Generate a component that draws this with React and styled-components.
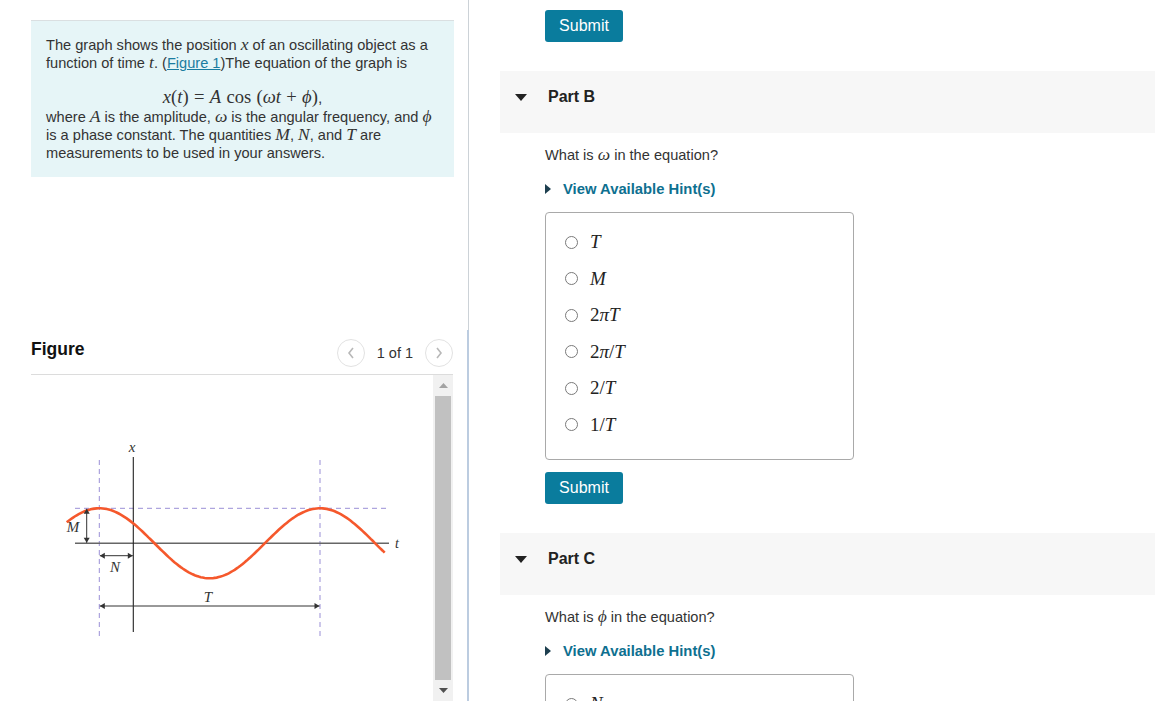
import React from "react";
import styled, { createGlobalStyle } from "styled-components";

const GlobalStyle = createGlobalStyle`
  html, body { margin: 0; padding: 0; height: 100%; overflow: hidden; background: #fff; }
  body { font-family: "Liberation Sans", Arial, sans-serif; color: #333; }
  * { box-sizing: border-box; }
`;

const Page = styled.div`
  display: flex;
  width: 1155px;
  height: 701px;
  overflow: hidden;
`;

const LeftPane = styled.div`
  width: 469px;
  flex: none;
  display: flex;
  flex-direction: column;
`;

const IntroArea = styled.div`
  height: 330px;
  flex: none;
  padding: 20px 14px 0 31px;
  border-right: 1px solid #ccd2d7;
`;

const IntroBox = styled.div`
  background: #e6f5f7;
  border-top: 1px solid #dadfe1;
  padding: 15px 15px 15px 15px;
  font-size: 14.6px;
  line-height: 18px;
  color: #333;
`;

const M = styled.span`
  font-family: "Liberation Serif", "DejaVu Serif", serif;
  font-style: italic;
  font-size: ${(p) => p.$size || "1.2em"};
  line-height: 1;
`;

const Up = styled.span`
  font-family: "Liberation Serif", "DejaVu Serif", serif;
  font-style: normal;
  font-size: ${(p) => p.$size || "1.2em"};
  line-height: 1;
`;

const Link = styled.a`
  color: #1a7ca0;
  text-decoration: underline;
`;

const Formula = styled.div`
  text-align: center;
  padding-top: 16px;
  line-height: 20px;
  font-size: 15.5px;
  word-spacing: 1px;
`;

const FigureArea = styled.div`
  flex: 1;
  display: flex;
  flex-direction: column;
  padding: 0 14px 0 31px;
  border-right: 2px solid #bccce0;
  min-height: 0;
`;

const FigureHeader = styled.div`
  height: 45px;
  flex: none;
  display: flex;
  align-items: center;
  justify-content: space-between;
  border-bottom: 1px solid #dcdcdc;
  padding-top: 1px;
`;

const FigureTitle = styled.h2`
  margin: 0 0 6px 0;
  font-size: 17.5px;
  font-weight: bold;
  color: #111;
`;

const Pager = styled.div`
  display: flex;
  align-items: center;
  gap: 12px;
  font-size: 14.5px;
  color: #333;
`;

const NavButton = styled.button`
  width: 28px;
  height: 28px;
  border-radius: 50%;
  border: 1px solid #e2e2e2;
  background: #fff;
  padding: 0;
  display: flex;
  align-items: center;
  justify-content: center;
`;

const FigureBody = styled.div`
  flex: 1;
  display: flex;
  min-height: 0;
`;

const Canvas = styled.div`
  flex: 1;
`;

const Scrollbar = styled.div`
  width: 20px;
  flex: none;
  background: #f1f1f1;
  display: flex;
  flex-direction: column;
  align-items: center;
  padding: 0 2px;
`;

const ScrollArrow = styled.div`
  height: 21px;
  display: flex;
  align-items: center;
  justify-content: center;
  flex: none;
`;

const Thumb = styled.div`
  width: 16px;
  flex: 1;
  background: #c1c1c1;
`;

const RightPane = styled.div`
  flex: 1;
  padding: 10px 0 0 31px;
  overflow: hidden;
`;

const Indent = styled.div`
  padding-left: 45px;
`;

const SubmitButton = styled.button`
  display: block;
  height: 32px;
  width: 78px;
  background: #0a7c9d;
  color: #fff;
  border: none;
  border-radius: 3px;
  font-family: "Liberation Sans", Arial, sans-serif;
  font-size: 16px;
  padding: 0;
  margin-top: ${(p) => p.$top || "0px"};
`;

const PartBand = styled.div`
  margin-top: 29px;
  height: 62px;
  background: #f7f7f7;
  display: flex;
  align-items: center;
  padding: 0 0 10px 15px;
  gap: 21px;
`;

const PartTitle = styled.h3`
  margin: 0;
  font-size: 16px;
  font-weight: bold;
  color: #222;
`;

const Question = styled.p`
  margin: 13px 0 0 0;
  font-size: 14.6px;
  line-height: 18px;
  color: #333;
`;

const Hint = styled.div`
  margin-top: 16px;
  display: flex;
  align-items: center;
  gap: 12px;
  font-size: 14.8px;
  line-height: 18px;
  font-weight: bold;
  color: #0e7090;
`;

const ChoiceBox = styled.div`
  margin-top: 14px;
  width: 309px;
  border: 1px solid #a9a9a9;
  border-radius: 4px;
  padding: 11px 0 16px 19px;
`;

const ChoiceRow = styled.label`
  height: 36.5px;
  display: flex;
  align-items: center;
  gap: 12px;
`;

const Radio = styled.span`
  width: 13px;
  height: 13px;
  border-radius: 50%;
  border: 1px solid #7a7a7a;
  background: #fff;
  flex: none;
`;

const ChoiceText = styled.span`
  font-family: "Liberation Serif", "DejaVu Serif", serif;
  font-size: 19px;
  color: #222;
`;

function Chevron({ dir }) {
  return (
    <svg width="10" height="14" viewBox="0 0 10 14">
      <path
        d={dir === "left" ? "M7 2 L3 7 L7 12" : "M3 2 L7 7 L3 12"}
        fill="none"
        stroke="#b8b8b8"
        strokeWidth="1.6"
      />
    </svg>
  );
}

function Tri({ dir, color, w = 12, h = 7 }) {
  const pts = {
    down: `0,0 ${w},0 ${w / 2},${h}`,
    up: `0,${h} ${w},${h} ${w / 2},0`,
    right: `0,0 ${w},${h / 2} 0,${h}`,
  }[dir];
  return (
    <svg width={w} height={h} viewBox={`0 0 ${w} ${h}`}>
      <polygon points={pts} fill={color} />
    </svg>
  );
}

function Arrow({ x1, y1, x2, y2 }) {
  const horiz = y1 === y2;
  const h = 3;
  const a = horiz
    ? [`${x1},${y1} ${x1 + 5},${y1 - h} ${x1 + 5},${y1 + h}`, `${x2},${y2} ${x2 - 5},${y2 - h} ${x2 - 5},${y2 + h}`]
    : [`${x1},${y1} ${x1 - h},${y1 + 5} ${x1 + h},${y1 + 5}`, `${x2},${y2} ${x2 - h},${y2 - 5} ${x2 + h},${y2 - 5}`];
  return (
    <g>
      <line x1={x1} y1={y1} x2={x2} y2={y2} stroke="#333" strokeWidth="1" />
      <polygon points={a[0]} fill="#333" />
      <polygon points={a[1]} fill="#333" />
    </g>
  );
}

function Graph() {
  const cy = 168.3;
  const amp = 35;
  const x0 = 68.3;
  const period = 220.7;
  const pts = [];
  for (let x = 35.7; x <= 355.5; x += 2) {
    const y = cy - amp * Math.cos((2 * Math.PI * (x - x0)) / period);
    pts.push(`${x.toFixed(1)},${y.toFixed(1)}`);
  }
  const serif = { fontFamily: '"Liberation Serif", "DejaVu Serif", serif', fontStyle: "italic", fill: "#333" };
  return (
    <svg width="402" height="326" viewBox="0 0 402 326">
      <line x1="68.3" y1="85" x2="68.3" y2="262" stroke="#9a8fd6" strokeWidth="1" strokeDasharray="5 4" />
      <line x1="289" y1="85" x2="289" y2="262" stroke="#9a8fd6" strokeWidth="1" strokeDasharray="5 4" />
      <line x1="44" y1="133.3" x2="357" y2="133.3" stroke="#9a8fd6" strokeWidth="1" strokeDasharray="5 4" />
      <line x1="44" y1="168.3" x2="358" y2="168.3" stroke="#666" strokeWidth="1.4" />
      <line x1="102.3" y1="82" x2="102.3" y2="257" stroke="#222" strokeWidth="1.1" />
      <polyline points={pts.join(" ")} fill="none" stroke="#f5582c" strokeWidth="2.6" />
      <Arrow x1={55.7} y1={133.8} x2={55.7} y2={167.8} />
      <Arrow x1={68.8} y1={180.7} x2={101.8} y2={180.7} />
      <Arrow x1={68.8} y1={231} x2={288.5} y2={231} />
      <text x="101" y="77" fontSize="15" textAnchor="middle" style={serif}>x</text>
      <text x="366" y="173" fontSize="14" textAnchor="middle" style={serif}>t</text>
      <text x="42" y="157" fontSize="15" textAnchor="middle" style={serif}>M</text>
      <text x="84" y="197" fontSize="15" textAnchor="middle" style={serif}>N</text>
      <text x="177" y="227" fontSize="15" textAnchor="middle" style={serif}>T</text>
    </svg>
  );
}

const choicesB = [
  <><M $size="1em">T</M></>,
  <><M $size="1em">M</M></>,
  <><Up $size="1em">2</Up><M $size="1em">πT</M></>,
  <><Up $size="1em">2</Up><M $size="1em">π</M><Up $size="1em">/</Up><M $size="1em">T</M></>,
  <><Up $size="1em">2/</Up><M $size="1em">T</M></>,
  <><Up $size="1em">1/</Up><M $size="1em">T</M></>,
];

function Part({ name, question, choices, submitTop }) {
  return (
    <>
      <PartBand>
        <Tri dir="down" color="#222" />
        <PartTitle>{name}</PartTitle>
      </PartBand>
      <Indent>
        <Question>{question}</Question>
        <Hint>
          <Tri dir="right" color="#1d3f4f" w={6} h={10} />
          View Available Hint(s)
        </Hint>
        <ChoiceBox>
          {choices.map((c, i) => (
            <ChoiceRow key={i}>
              <Radio />
              <ChoiceText>{c}</ChoiceText>
            </ChoiceRow>
          ))}
        </ChoiceBox>
        {submitTop && <SubmitButton $top={submitTop}>Submit</SubmitButton>}
      </Indent>
    </>
  );
}

export default function App() {
  return (
    <>
      <GlobalStyle />
      <Page>
        <LeftPane>
          <IntroArea>
            <IntroBox>
              The graph shows the position <M>x</M> of an oscillating object as a function of time <M>t</M>.{" "}
              (<Link>Figure 1</Link>)The equation of the graph is
              <Formula>
                <M>x</M><Up>(</Up><M>t</M><Up>)</Up> <Up>=</Up> <M>A</M> <Up>cos</Up> <Up>(</Up><M>ωt</M> <Up>+</Up> <M>ϕ</M><Up>)</Up>,
              </Formula>
              where <M>A</M> is the amplitude, <M>ω</M> is the angular frequency, and <M>ϕ</M> is a phase constant.
              The quantities <M>M</M>, <M>N</M>, and <M>T</M> are measurements to be used in your answers.
            </IntroBox>
          </IntroArea>
          <FigureArea>
            <FigureHeader>
              <FigureTitle>Figure</FigureTitle>
              <Pager>
                <NavButton aria-label="previous"><Chevron dir="left" /></NavButton>
                <span>1 of 1</span>
                <NavButton aria-label="next"><Chevron dir="right" /></NavButton>
              </Pager>
            </FigureHeader>
            <FigureBody>
              <Canvas>
                <Graph />
              </Canvas>
              <Scrollbar>
                <ScrollArrow><Tri dir="up" color="#a3a3a3" w={9} h={5} /></ScrollArrow>
                <Thumb />
                <ScrollArrow><Tri dir="down" color="#505050" w={9} h={5} /></ScrollArrow>
              </Scrollbar>
            </FigureBody>
          </FigureArea>
        </LeftPane>
        <RightPane>
          <Indent>
            <SubmitButton>Submit</SubmitButton>
          </Indent>
          <Part
            name="Part B"
            question={<>What is <M>ω</M> in the equation?</>}
            choices={choicesB}
            submitTop="12px"
          />
          <Part
            name="Part C"
            question={<>What is <M>ϕ</M> in the equation?</>}
            choices={[<M $size="1em">N</M>]}
          />
        </RightPane>
      </Page>
    </>
  );
}
